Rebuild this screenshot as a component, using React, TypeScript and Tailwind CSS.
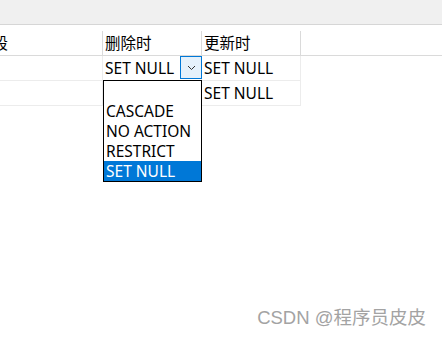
import React from 'react';

const font = { fontFamily: '"Noto Sans", "Noto Sans CJK SC", sans-serif' };

const options = ['', 'CASCADE', 'NO ACTION', 'RESTRICT', 'SET NULL'];

export default function App() {
  return (
    <div className="relative w-[442px] h-[338px] overflow-hidden bg-white text-[15.5px] text-black" style={font}>
      {/* toolbar strip */}
      <div className="h-[25px] bg-[#f0f0f0] border-b border-[#d6d6d6]" />

      {/* foreign key grid */}
      <div className="relative mt-[6px] ml-[-88px] leading-[25px]">
        {/* header */}
        <div className="flex h-[25px] border-b border-[#dadada]">
          <div className="w-[191px] pl-[3px] border-r border-[#dadada] whitespace-nowrap">被引用的字段</div>
          <div className="w-[99px] pl-[2px] border-r border-[#dadada]">删除时</div>
          <div className="w-[99px] pl-[2px] border-r border-[#dadada]">更新时</div>
        </div>

        {/* row 1 */}
        <div className="flex h-[25px]">
          <div className="w-[191px] border-b border-r border-[#ececec]" />
          <div className="relative w-[99px] pl-[2px] border-b border-r border-[#ececec]">
            SET NULL
            <div className="absolute right-[-1px] top-[0px] w-[22px] h-[23px] flex items-center justify-center bg-[#e5f1fb] border border-[#0078d7]">
              <svg width="9" height="6" viewBox="0 0 9 6" fill="none">
                <path d="M1 1l3.5 3.5L8 1" stroke="#333" strokeWidth="1" />
              </svg>
            </div>
          </div>
          <div className="w-[99px] pl-[2px] border-b border-r border-[#ececec]">SET NULL</div>
        </div>

        {/* row 2 */}
        <div className="flex h-[25px]">
          <div className="w-[191px] border-b border-r border-[#ececec]" />
          <div className="w-[99px] border-b border-r border-[#ececec]" />
          <div className="w-[99px] pl-[2px] border-b border-r border-[#ececec]">SET NULL</div>
        </div>

        {/* open dropdown list */}
        <div className="absolute left-[191px] top-[49px] w-[99px] flex flex-col border border-black bg-white leading-[21px]">
          {options.map((o, i) => (
            <div
              key={i}
              className={
                o === 'SET NULL'
                  ? 'h-[20px] pl-[2px] bg-[#0078d7] text-white'
                  : 'h-[20px] pl-[2px]'
              }
            >
              {o}
            </div>
          ))}
        </div>
      </div>

      {/* watermark */}
      <div
        className="absolute right-[16px] bottom-[6px] text-[18.5px] text-[#a3a3a3] whitespace-nowrap"
        style={{ fontFamily: '"Liberation Sans", "Noto Sans CJK SC", sans-serif' }}
      >
        CSDN @程序员皮皮
      </div>
    </div>
  );
}
